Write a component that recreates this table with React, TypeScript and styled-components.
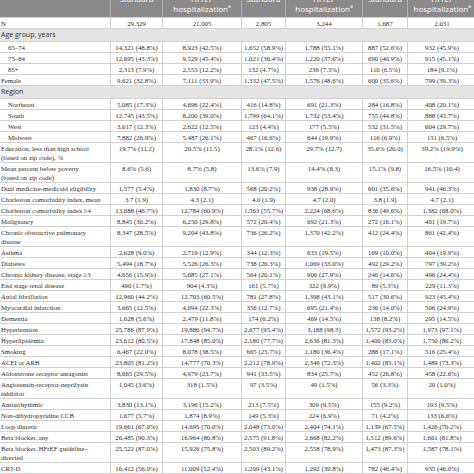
import React from "react";
import styled, { createGlobalStyle } from "styled-components";

const GlobalStyle = createGlobalStyle`
  html, body {
    margin:0;
    padding:0;
    background:#fff;
    overflow:hidden;
  }
`

const Page = styled.div`
  width:474px;
  height:474px;
  overflow:hidden;
`

const Table = styled.table`
  width:478px;
  table-layout:fixed;
  border-collapse:collapse;
  margin:-7px 0 0 -2px;
  font-family:"Liberation Serif", "Times New Roman", serif;
  font-size:6.8px;
  color:#2e2e2e;
`

const HeadCell = styled.th`
  background:#8a8a8a;
  color:#fff;
  font-family:"Open Sans", "Liberation Sans", sans-serif;
  font-weight:400;
  font-size:8px;
  line-height:10px;
  vertical-align:top;
  text-align:center;
  padding:1px 1px 3px;
  border-left:1px solid #b3b3b3;
`

const Sup = styled.sup`
  font-size:5px;
  line-height:0;
  vertical-align:super;
`

const Cell = styled.td`
  border:1px solid #d2d2d2;
  padding:1px 2px 0;
  line-height:9px;
  vertical-align:top;
  text-align:center;
  white-space:nowrap;
  overflow:hidden;
`

const LabelCell = styled(Cell)<{ $indent?: boolean }>`
  text-align:left;
  white-space:normal;
  padding-left:${p => (p.$indent ? 9 : 2)}px;
`

const SectionCell = styled.td`
  background:#e4e4e4;
  border:1px solid #d2d2d2;
  font-family:"Open Sans", "Liberation Sans", sans-serif;
  font-size:7px;
  line-height:10px;
  padding:1px 2px;
  color:#2e2e2e;
`

type Row =
  | { kind: "section"; label: string }
  | { kind: "data"; label: string; values: string[]; indent?: boolean }

const widths = [112, 52, 79, 44, 77, 45, 69]

const rows: Row[] = [
  { kind: "data", label: "N", values: ["29,329", "21,005", "2,805", "3,244", "1,687", "2,031"] },
  { kind: "section", label: "Age group, years" },
  { kind: "data", indent: true, label: "65–74", values: ["14,321 (48.8%)", "8,923 (42.5%)", "1,652 (58.9%)", "1,788 (55.1%)", "887 (52.6%)", "932 (45.9%)"] },
  { kind: "data", indent: true, label: "75–84", values: ["12,695 (43.3%)", "9,529 (45.4%)", "1,021 (36.4%)", "1,220 (37.6%)", "690 (40.9%)", "915 (45.1%)"] },
  { kind: "data", indent: true, label: "85+", values: ["2,313 (7.9%)", "2,553 (12.2%)", "132 (4.7%)", "236 (7.3%)", "110 (6.5%)", "184 (9.1%)"] },
  { kind: "data", label: "Female", values: ["9,621 (32.8%)", "7,111 (33.9%)", "1,332 (47.5%)", "1,576 (48.6%)", "600 (35.6%)", "799 (39.3%)"] },
  { kind: "section", label: "Region" },
  { kind: "data", indent: true, label: "Northeast", values: ["5,085 (17.3%)", "4,696 (22.4%)", "416 (14.8%)", "691 (21.3%)", "284 (16.8%)", "408 (20.1%)"] },
  { kind: "data", indent: true, label: "South", values: ["12,745 (43.5%)", "8,200 (39.0%)", "1,799 (64.1%)", "1,732 (53.4%)", "755 (44.8%)", "888 (43.7%)"] },
  { kind: "data", indent: true, label: "West", values: ["3,617 (12.3%)", "2,622 (12.5%)", "123 (4.4%)", "177 (5.5%)", "532 (31.5%)", "604 (29.7%)"] },
  { kind: "data", indent: true, label: "Midwest", values: ["7,882 (26.9%)", "5,487 (26.1%)", "467 (16.6%)", "644 (19.9%)", "116 (6.9%)", "131 (6.5%)"] },
  { kind: "data", label: "Education, less than high school\n(based on zip code), %", values: ["19.7% (11.2)", "20.5% (11.5)", "28.1% (12.6)", "29.7% (12.7)", "35.6% (20.0)", "39.2% (19.9%)"] },
  { kind: "data", label: "Mean percent below poverty\n(based on zip code)", values: ["8.6% (5.6)", "8.7% (5.8)", "13.6% (7.9)", "14.4% (8.3)", "15.1% (9.8)", "16.5% (10.4)"] },
  { kind: "data", label: "Dual medicare-medicaid eligibility", values: ["1,577 (5.4%)", "1,830 (8.7%)", "568 (20.2%)", "938 (28.9%)", "601 (35.6%)", "941 (46.3%)"] },
  { kind: "data", label: "Charleston comorbidity index, mean", values: ["3.7 (1.9)", "4.3 (2.1)", "4.0 (1.9)", "4.7 (2.0)", "3.8 (1.9)", "4.7 (2.1)"] },
  { kind: "data", label: "Charleston comorbidity index ≥4", values: ["13,688 (46.7%)", "12,784 (60.9%)", "1,563 (55.7%)", "2,224 (68.6%)", "836 (49.6%)", "1,382 (68.0%)"] },
  { kind: "data", label: "Malignancy", values: ["8,845 (30.2%)", "6,250 (29.8%)", "572 (20.4%)", "692 (21.3%)", "272 (16.1%)", "401 (19.7%)"] },
  { kind: "data", label: "Chronic obstructive pulmonary\ndisease", values: ["8,347 (28.5%)", "9,204 (43.8%)", "736 (26.2%)", "1,370 (42.2%)", "412 (24.4%)", "861 (42.4%)"] },
  { kind: "data", label: "Asthma", values: ["2,628 (9.0%)", "2,719 (12.9%)", "344 (12.3%)", "633 (19.5%)", "169 (10.0%)", "404 (19.9%)"] },
  { kind: "data", label: "Diabetes", values: ["5,494 (18.7%)", "5,526 (26.3%)", "738 (26.3%)", "1,069 (33.0%)", "492 (29.2%)", "797 (39.2%)"] },
  { kind: "data", label: "Chronic kidney disease, stage ≥3", values: ["4,656 (15.9%)", "5,685 (27.1%)", "564 (20.1%)", "906 (27.9%)", "246 (14.6%)", "496 (24.4%)"] },
  { kind: "data", label: "End stage renal disease", values: ["490 (1.7%)", "904 (4.3%)", "161 (5.7%)", "322 (9.9%)", "89 (5.3%)", "229 (11.3%)"] },
  { kind: "data", label: "Atrial fibrillation", values: ["12,960 (44.2%)", "12,703 (60.5%)", "781 (27.8%)", "1,398 (43.1%)", "517 (30.6%)", "923 (45.4%)"] },
  { kind: "data", label: "Myocardial infarction", values: ["3,665 (12.5%)", "4,694 (22.3%)", "356 (12.7%)", "695 (21.4%)", "236 (14.0%)", "506 (24.9%)"] },
  { kind: "data", label: "Dementia", values: ["1,628 (5.6%)", "2,479 (11.8%)", "174 (6.2%)", "469 (14.5%)", "138 (8.2%)", "295 (14.5%)"] },
  { kind: "data", label: "Hypertension", values: ["25,786 (87.9%)", "19,886 (94.7%)", "2,677 (95.4%)", "3,188 (98.3)", "1,572 (93.2%)", "1,973 (97.1%)"] },
  { kind: "data", label: "Hyperlipidemia", values: ["23,612 (80.5%)", "17,848 (85.0%)", "2,180 (77.7%)", "2,636 (81.3%)", "1,400 (83.0%)", "1,750 (86.2%)"] },
  { kind: "data", label: "Smoking", values: ["6,467 (22.0%)", "8,078 (38.5%)", "665 (23.7%)", "1,180 (36.4%)", "288 (17.1%)", "516 (25.4%)"] },
  { kind: "data", label: "ACEI or ARB", values: ["23,805 (81.2%)", "14,777 (70.3%)", "2,212 (78.9%)", "2,346 (72.3%)", "1,402 (83.1%)", "1,489 (73.3%)"] },
  { kind: "data", label: "Aldosterone receptor antagonist", values: ["8,665 (29.5%)", "4,979 (23.7%)", "941 (33.5%)", "834 (25.7%)", "452 (26.8%)", "458 (22.6%)"] },
  { kind: "data", label: "Angiotensin-receptor-neprilysin\ninhibitor", values: ["1,045 (3.6%)", "318 (1.5%)", "97 (3.5%)", "49 (1.5%)", "56 (3.3%)", "20 (1.0%)"] },
  { kind: "data", label: "Antiarrhythmic", values: ["3,830 (13.1%)", "3,196 (15.2%)", "213 (7.5%)", "309 (9.5%)", "155 (9.2%)", "193 (9.5%)"] },
  { kind: "data", label: "Non-dihydropyridine CCB", values: ["1,677 (5.7%)", "1,874 (8.9%)", "149 (5.3%)", "224 (6.9%)", "71 (4.2%)", "133 (6.6%)"] },
  { kind: "data", label: "Loop diuretic", values: ["19,661 (67.0%)", "14,695 (70.0%)", "2,048 (73.0%)", "2,404 (74.1%)", "1,139 (67.5%)", "1,426 (70.2%)"] },
  { kind: "data", label: "Beta blocker, any", values: ["26,485 (90.3%)", "16,964 (80.8%)", "2,575 (91.8%)", "2,668 (82.2%)", "1,512 (89.6%)", "1,661 (81.8%)"] },
  { kind: "data", label: "Beta blocker, HFrEF guideline-\ndirected", values: ["25,522 (87.0%)", "15,926 (75.8%)", "2,503 (89.2%)", "2,558 (78.9%)", "1,473 (87.3%)", "1,587 (78.1%)"] },
  { kind: "data", label: "CRT-D", values: ["16,412 (56.0%)", "11,009 (52.4%)", "1,209 (43.1%)", "1,292 (39.8%)", "782 (46.4%)", "935 (46.0%)"] },
  { kind: "section", label: "" },
]

function Lines({ text }: { text: string }) {
  const parts = text.split("\n")
  return (
    <>
      {parts.map((p, i) => (
        <React.Fragment key={i}>
          {i > 0 && <br />}
          {p}
        </React.Fragment>
      ))}
    </>
  )
}

function HeaderRow() {
  const groups = [0, 1, 2]
  return (
    <tr>
      <HeadCell />
      {groups.map(g => (
        <React.Fragment key={g}>
          <HeadCell>Standard</HeadCell>
          <HeadCell>
            HFrEF
            <br />
            hospitalization<Sup>a</Sup>
          </HeadCell>
        </React.Fragment>
      ))}
    </tr>
  )
}

export default function App() {
  return (
    <Page>
      <GlobalStyle />
      <Table>
        <colgroup>
          {widths.map((w, i) => (
            <col key={i} style={{ width: w }} />
          ))}
        </colgroup>
        <thead>
          <HeaderRow />
        </thead>
        <tbody>
          {rows.map((row, i) =>
            row.kind === "section" ? (
              <tr key={i}>
                <SectionCell colSpan={7}>{row.label || "\u00a0"}</SectionCell>
              </tr>
            ) : (
              <tr key={i}>
                <LabelCell $indent={row.indent}>
                  <Lines text={row.label} />
                </LabelCell>
                {row.values.map((v, j) => (
                  <Cell key={j}>{v}</Cell>
                ))}
              </tr>
            )
          )}
        </tbody>
      </Table>
    </Page>
  )
}
